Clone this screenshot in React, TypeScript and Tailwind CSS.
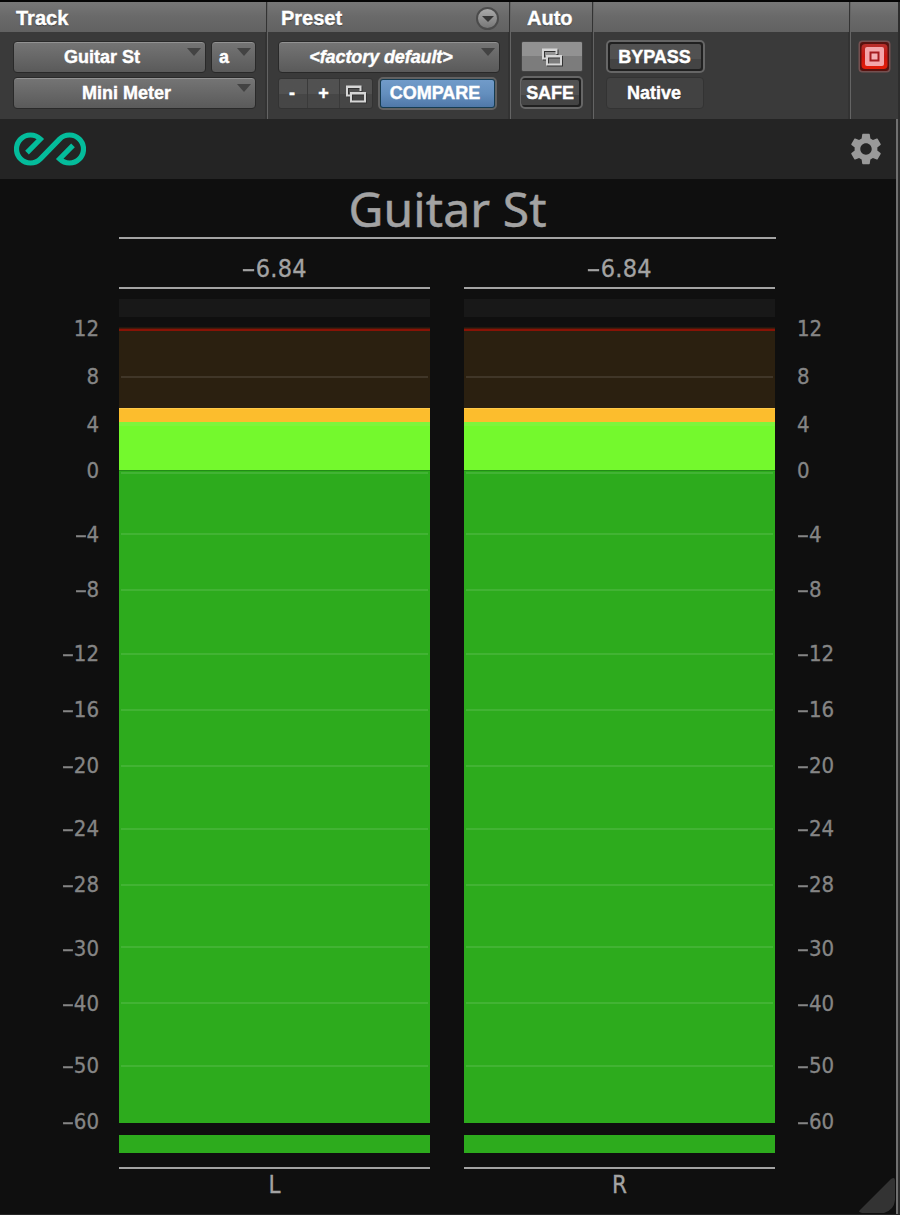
import type { ReactNode } from 'react'
import clsx from 'clsx'
import { MdSettings } from 'react-icons/md'

// span = distance in px down to the next mark, line = top of the grid line
const scale = [
  { value: 12, span: 48 },
  { value: 8, span: 48, line: 376 },
  { value: 4, span: 46 },
  { value: 0, span: 64, line: 472 },
  { value: -4, span: 55, line: 533 },
  { value: -8, span: 64, line: 589 },
  { value: -12, span: 56, line: 653 },
  { value: -16, span: 56, line: 709 },
  { value: -20, span: 63, line: 765 },
  { value: -24, span: 56, line: 828 },
  { value: -28, span: 64, line: 884 },
  { value: -30, span: 55, line: 946 },
  { value: -40, span: 62, line: 1002 },
  { value: -50, span: 56, line: 1065 },
  { value: -60, span: 24 },
]

const METER_TOP = 327

const channels = [
  { name: 'L', peak: -6.84 },
  { name: 'R', peak: -6.84 },
]

function Section({ title, className, children, action }: {
  title?: string
  className?: string
  children?: ReactNode
  action?: ReactNode
}) {
  return (
    <section className={clsx('flex flex-col shrink-0 h-full border-r border-[#646464] shadow-[inset_-2px_0_0_#333333]', className)}>
      <div className="h-[30px] shrink-0 flex items-center justify-between bg-linear-to-b from-[#777777] via-[#696969] to-[#626262] mr-px">
        <span className="text-[20px] leading-[30px] pt-px">{title}</span>
        {action}
      </div>
      {children}
    </section>
  )
}

function Arrow({ className }: { className?: string }) {
  return (
    <svg width="14" height="8" viewBox="0 0 14 8" className={className}>
      <path d="M0 0h14L7 8z" fill="#434343" />
    </svg>
  )
}

function Select({ className, children }: { className?: string; children: ReactNode }) {
  return (
    <button
      className={clsx(
        'relative h-[32px] shrink-0 rounded-[4px] border border-[#292929] bg-linear-to-b from-[#757575] to-[#5a5a5a] shadow-[inset_0_1px_0_#929292] leading-[30px]',
        className
      )}
    >
      {children}
      <Arrow className="absolute right-[4px] top-[6px]" />
    </button>
  )
}

function WindowsIcon() {
  return (
    <svg width="22" height="20" viewBox="0 0 22 20" fill="none" className="drop-shadow-[1px_1px_0_#333]">
      <path d="M5 11.5H2v-9h13.5V7M1 3h15.5" stroke="#d6d6d6" strokeWidth="2" />
      <path d="M6 9h14v8.5H6zM6 9.5h14" stroke="#d6d6d6" strokeWidth="2" />
    </svg>
  )
}

function Toolbar() {
  return (
    <header className="h-[117px] w-[898px] flex bg-[#3a3a3a] text-white font-bold text-[18px] font-['Liberation_Sans',Arial,sans-serif] [text-shadow:0_1px_1px_#333] [-webkit-text-stroke:0.4px_white]">
      <Section title="Track" className="w-[268px] [&>div:first-child]:pl-4">
        <div className="pl-[13px] pt-[9px] flex flex-col gap-1">
          <div className="flex gap-[5px]">
            <Select className="w-[193px] pr-[15px]">Guitar St</Select>
            <Select className="w-[45px] pr-[19px]">a</Select>
          </div>
          <Select className="w-[243px] pr-[16px]">Mini Meter</Select>
        </div>
      </Section>

      <Section
        title="Preset"
        className="w-[243px] [&>div:first-child]:pl-[13px] [&>div:first-child]:pr-[10px]"
        action={
          <button className="size-[23px] rounded-full border-2 border-[#4b4b4b] bg-linear-to-b from-[#aaaaaa] to-[#777777] flex items-center justify-center mt-[3px]">
            <svg width="12" height="6" viewBox="0 0 12 6"><path d="M0 0h12L6 6z" fill="#363636" /></svg>
          </button>
        }
      >
        <div className="pl-[10px] pt-[9px] flex flex-col gap-1">
          <Select className="w-[222px] pr-[16px] italic tracking-[-0.1px]">&lt;factory default&gt;</Select>
          <div className="flex items-center pt-px">
            <div className="flex h-[31px] w-[95px] rounded-[3px] border border-[#333333] bg-linear-to-b from-[#515151] from-50% to-[#464646] to-50%">
              <button className="w-[29px] pr-[2px] border-r border-[#3a3a3a]">-</button>
              <button className="w-[32px] border-r border-[#3a3a3a]">+</button>
              <button className="flex-1 flex items-center justify-center"><WindowsIcon /></button>
            </div>
            <button className="ml-[5px] w-[119px] h-[33px] -my-px rounded-[5px] border-2 border-[#626262] bg-[#153b50] p-px leading-[26px]">
              <span className="block h-[27px] rounded-[2px] pr-[5px] bg-linear-to-b from-[#719bc9] via-[#648fbe] via-50% to-[#5078a8]">COMPARE</span>
            </button>
          </div>
        </div>
      </Section>

      <Section title="Auto" className="w-[83px] [&>div:first-child]:pl-[16px]">
        <div className="pt-[9px] pl-[9px] flex flex-col gap-[4px]">
          <button className="ml-px w-[62px] h-[31px] border border-[#444444] rounded-[2px] flex items-center justify-center bg-linear-to-b from-[#929292] from-50% to-[#7c7c7c] to-50%">
            <WindowsIcon />
          </button>
          <button className="w-[63px] h-[33px] rounded-[5px] border-2 border-[#666666] bg-[#202020] p-[2px] leading-[27px]">
            <span className="block -ml-[3px] h-[25px] rounded-[2px] bg-linear-to-b from-[#515151] from-60% to-[#444444] to-60% tracking-[-0.1px]">SAFE</span>
          </button>
        </div>
      </Section>

      <Section className="w-[257px]">
        <div className="pl-[12px] pt-[8px] flex flex-col gap-[4px]">
          <button className="w-[99px] h-[33px] rounded-[5px] border-2 border-[#666666] bg-[#202020] p-[2px] leading-[27px]">
            <span className="block h-[25px] rounded-[2px] pr-[2px] bg-linear-to-b from-[#515151] from-60% to-[#444444] to-60%">BYPASS</span>
          </button>
          <div className="w-[98px] h-[32px] rounded-[4px] border border-[#333333] bg-[#424242] text-center leading-[31px] pr-[2px]">
            Native
          </div>
        </div>
      </Section>

      <section className="flex-1">
        <div className="h-[30px] bg-linear-to-b from-[#777777] via-[#696969] to-[#626262]" />
        <button aria-label="Target" className="block ml-[6px] mt-[8px]">
          <svg width="34" height="34" viewBox="0 0 34 34">
            <defs>
              <linearGradient id="target" x2="0" y2="1">
                <stop offset="0" stopColor="#b82f2c" />
                <stop offset="0.5" stopColor="#c91710" />
                <stop offset="1" stopColor="#e51d08" />
              </linearGradient>
            </defs>
            <rect x="1.5" y="0.5" width="32" height="32" rx="4" fill="#745050" />
            <rect x="3" y="2" width="29" height="29" rx="3" fill="#59120f" />
            <rect x="4.5" y="4" width="26" height="25" rx="4" fill="url(#target)" />
            <rect x="8" y="7" width="19" height="19" rx="2" fill="#f4a6aa" />
            <rect x="12.5" y="11.5" width="10" height="10" fill="#a51c20" />
            <rect x="14.5" y="13.5" width="6" height="6" fill="#f5b0b4" />
          </svg>
        </button>
      </section>
    </header>
  )
}

function Logo() {
  return (
    <svg width="72" height="34" viewBox="0 0 72 34" fill="none">
      <path
        d="M13 20.6 26.4 7.1A14 14 0 1 0 26.4 26.9L45.6 7.1A14 14 0 1 1 45.6 26.9L59 13.4"
        stroke="#04bc9b"
        strokeWidth="5.2"
      />
    </svg>
  )
}

// Decibel value with a wide minus sign
function Db({ value }: { value: number }) {
  return (
    <>
      {value < 0 && <span className="inline-block scale-x-120 mx-px">–</span>}
      {Math.abs(value)}
    </>
  )
}

function Scale({ side }: { side: 'left' | 'right' }) {
  return (
    <div
      className={clsx(
        "pt-[78px] text-[22px] leading-6 text-[#858585] font-['DejaVu_Sans_Condensed','DejaVu_Sans',sans-serif] font-stretch-condensed [-webkit-text-stroke:0.3px_#858585]",
        side === 'left' ? 'w-[119px] pr-[20px] text-right' : 'w-[121px] pl-[22px]'
      )}
    >
      {scale.map((mark) => (
        <div key={mark.value} style={{ height: mark.span }}><Db value={mark.value} /></div>
      ))}
    </div>
  )
}

function Channel({ name, peak }: { name: string; peak: number }) {
  return (
    <div className="w-[311px] flex flex-col font-['DejaVu_Sans_Condensed','DejaVu_Sans',sans-serif] font-stretch-condensed text-[#a3a3a3] [-webkit-text-stroke:0.3px_#a3a3a3]">
      <div className="h-[50px] border-b-2 border-[#a3a3a3] text-center text-[25px] leading-[60px] tracking-[0.2px]">
        <Db value={peak} />
      </div>
      <div className="mt-[10px] h-[18px] bg-[#181818]" />

      <div className="relative mt-[10px] h-[796px] flex flex-col">
        <div className="h-px bg-[#21190f]" />
        <div className="h-px bg-[#4a170b]" />
        <div className="h-[2px] bg-[#881306]" />
        <div className="h-[77px] bg-[#2b2010]" />
        <div className="h-[14px] bg-[#fcbd2d] border-t border-[#ffc849]" />
        <div className="h-[48px] bg-[#74f92d] border-t-4 border-[#7df53c]" />
        <div className="flex-1 bg-[#2dab1d] border-t border-[#238c18]" />
        {scale.map((mark) =>
          mark.line ? (
            <div
              key={mark.value}
              className="absolute inset-x-[2px] h-[2px] bg-white/10"
              style={{ top: mark.line - METER_TOP }}
            />
          ) : null
        )}
      </div>

      <div className="mt-[12px] h-[18px] bg-[#2dab1d]" />
      <div className="mt-[14px] border-t-2 border-[#a3a3a3] text-center text-[24px] leading-[32px]">{name}</div>
    </div>
  )
}

export default function App() {
  return (
    <div className="w-[900px] h-[1215px] overflow-hidden bg-[#2d2d2d] border-t-2 border-[#050505] flex flex-col">
      <Toolbar />

      <div className="relative w-[898px] h-[1095px] bg-[#0f0f0f] border-r-2 border-[#707070]">
        <div className="h-[60px] bg-[#242424] flex items-center justify-between pl-[14px] pr-[11px]">
          <Logo />
          <MdSettings size={38} className="text-[#999999]" />
        </div>

        <h1 className="ml-[119px] w-[657px] h-[60px] border-b-2 border-[#a3a3a3] text-center text-[48px] leading-[59px] text-[#a3a3a3] font-['Noto_Sans',sans-serif] tracking-[0.1px] [-webkit-text-stroke:0.5px_#a3a3a3]">
          Guitar St
        </h1>

        <div className="flex">
          <Scale side="left" />
          <div className="flex gap-[34px]">
            {channels.map((channel) => (
              <Channel key={channel.name} {...channel} />
            ))}
          </div>
          <Scale side="right" />
        </div>

        {/* Resize handle */}
        <svg width="37" height="37" viewBox="0 0 37 37" className="absolute right-0 bottom-0">
          <path d="M1 33 32 2q4-3 4 2v19q-1 10-11 13H3q-4-1-2-3z" fill="#333333" />
        </svg>
      </div>
      <div className="flex-1 bg-[#252525]" />
    </div>
  )
}
